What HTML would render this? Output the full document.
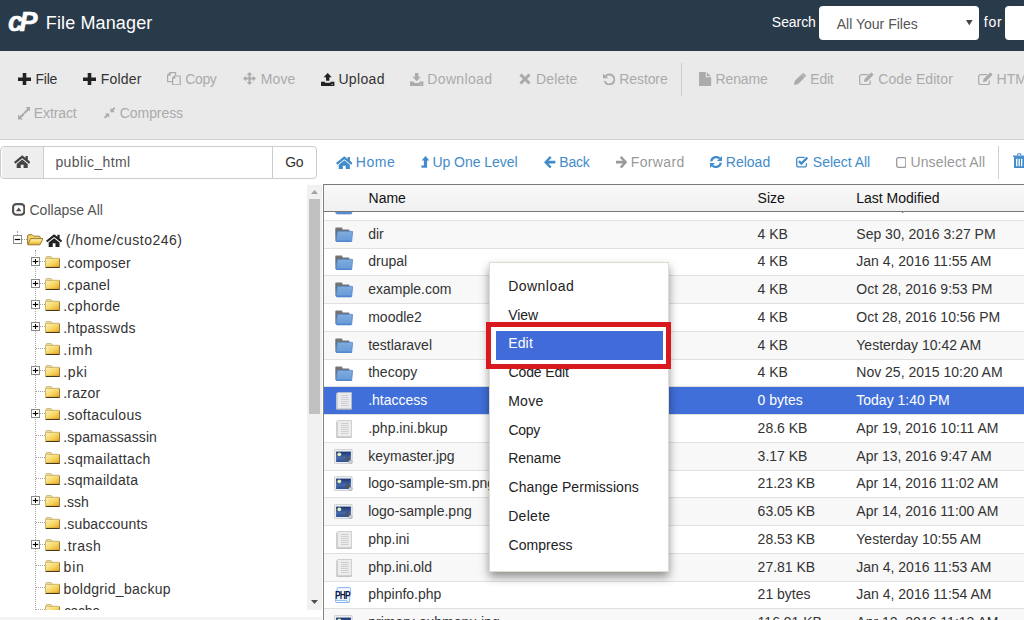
<!DOCTYPE html><html><head><meta charset="utf-8"><title>File Manager</title><style>html,body{margin:0;padding:0}body{width:1024px;height:620px;overflow:hidden;position:relative;background:#fff;font-family:"Liberation Sans", sans-serif;}.t{position:absolute;white-space:nowrap;line-height:20px;height:20px}</style></head><body><div style="position:absolute;left:0px;top:0px;width:1024px;height:51px;background:#293a4a"></div><span style="position:absolute;left:8px;top:7.3px;font-size:27px;line-height:30px;font-weight:bold;font-style:italic;color:#fff;letter-spacing:-3.4px;-webkit-text-stroke:0.5px #fff">cP</span><span class="t" style="left:45.82px;top:12.76px;font-size:18px;color:#fff;letter-spacing:0.130px;">File Manager</span><span class="t" style="left:771.86px;top:12.15px;font-size:14px;color:#fff;letter-spacing:-0.063px;">Search</span><div style="position:absolute;left:819.2px;top:6.1px;width:160.1px;height:33.6px;background:#fff;border-radius:4px"></div><span class="t" style="left:836.72px;top:13.90px;font-size:14px;color:#555;letter-spacing:0.007px;">All Your Files</span><svg style="position:absolute;left:966.1px;top:20px;" width="6.6" height="5.4" viewBox="0 0 6 5" preserveAspectRatio="none"><path d="M0 0h6L3 5z" fill="#444"/></svg><span class="t" style="left:983.65px;top:12.15px;font-size:14px;color:#fff;letter-spacing:0.900px;">for</span><div style="position:absolute;left:1005.2px;top:6.1px;width:30px;height:33.6px;background:#fff;border-radius:4px"></div><div style="position:absolute;left:0px;top:51px;width:1024px;height:88px;background:#eaeaea"></div><div style="position:absolute;left:0px;top:139px;width:1024px;height:1px;background:#cfcfcf"></div><svg style="position:absolute;left:17.8px;top:73px;" width="13" height="12.4" viewBox="0 0 13 12.4" preserveAspectRatio="none"><path d="M4.7 0h3.600v4.400H13v3.600H8.300V12.400H4.700V8H0V4.400h4.700z" fill="#222"/></svg><span class="t" style="left:35.60px;top:68.95px;font-size:14px;color:#333;letter-spacing:-0.314px;">File</span><svg style="position:absolute;left:82.8px;top:73px;" width="13" height="12.4" viewBox="0 0 13 12.4" preserveAspectRatio="none"><path d="M4.7 0h3.600v4.400H13v3.600H8.300V12.400H4.700V8H0V4.400h4.700z" fill="#222"/></svg><span class="t" style="left:100.85px;top:68.95px;font-size:14px;color:#333;letter-spacing:0.159px;">Folder</span><svg style="position:absolute;left:166.9px;top:71.9px;" width="14" height="13.6" viewBox="0 0 14 13.6" preserveAspectRatio="none"><g fill="none" stroke="#ababab" stroke-width="1.200" stroke-linejoin="round"><path d="M8.600 3.600V.6H3.100L.6 3.100V9.700H5.200"/><path d="M3.100 .6V3.100H.6"/><path d="M7.700 4H13.200V12.900H5.600V6.100z"/><path d="M7.700 4V6.100H5.600"/></g></svg><span class="t" style="left:185.29px;top:68.95px;font-size:14px;color:#ababab;letter-spacing:-0.400px;">Copy</span><svg style="position:absolute;left:243.1px;top:71.7px;" width="13" height="13" viewBox="0 0 13 13" preserveAspectRatio="none"><path fill="#ababab" d="M6.500 0L9.300 3.100H7.500V5.500H9.900V3.700L13 6.500 9.900 9.300V7.500H7.500V9.900H9.300L6.500 13 3.700 9.900H5.500V7.500H3.100V9.300L0 6.500 3.100 3.700V5.500H5.500V3.100H3.700z"/></svg><span class="t" style="left:260.85px;top:68.95px;font-size:14px;color:#ababab;letter-spacing:0.045px;">Move</span><svg style="position:absolute;left:321.2px;top:72.6px;" width="13.4" height="13" viewBox="0 0 13.4 13" preserveAspectRatio="none"><g fill="#222"><path d="M6.700 0L10.800 4.300H8.400V7.800H5V4.300H2.600z"/><path d="M0 8.700H4V9.700H9.400V8.700H13.400V13H0z"/></g><rect x="10.600" y="10.900" width="1.100" height="1" fill="#eaeaea"/></svg><span class="t" style="left:338.42px;top:68.95px;font-size:14px;color:#333;letter-spacing:0.341px;">Upload</span><svg style="position:absolute;left:410.3px;top:72.6px;" width="13.4" height="13" viewBox="0 0 13.4 13" preserveAspectRatio="none"><g fill="#ababab"><path d="M5 0H8.400V3.800H10.800L6.700 8.200 2.600 3.800H5z"/><path d="M0 8.500H3.300L4.800 10H8.600L10.100 8.500H13.400V13H0z"/></g><rect x="10.600" y="10.900" width="1.100" height="1" fill="#eaeaea"/></svg><span class="t" style="left:427.35px;top:68.95px;font-size:14px;color:#ababab;letter-spacing:0.341px;">Download</span><svg style="position:absolute;left:519.2px;top:73.2px;" width="12" height="12" viewBox="0 0 12 12" preserveAspectRatio="none"><path d="M1.5 1.5l9 9M10.5 1.5l-9 9" stroke="#ababab" stroke-width="3.1" fill="none"/></svg><span class="t" style="left:536.10px;top:68.95px;font-size:14px;color:#ababab;letter-spacing:0.130px;">Delete</span><svg style="position:absolute;left:602.5px;top:72.8px;" width="12.5" height="12.5" viewBox="0 0 12.5 12.5" preserveAspectRatio="none"><path d="M2.6 3.2A5 5 0 1 1 1.6 8" stroke="#ababab" stroke-width="1.9" fill="none"/><path d="M0 0.6L5.2 5.2H0z" fill="#ababab"/></svg><span class="t" style="left:619.35px;top:68.95px;font-size:14px;color:#ababab;letter-spacing:-0.110px;">Restore</span><div style="position:absolute;left:681.0px;top:62.5px;width:1.2px;height:33px;background:#cecece"></div><svg style="position:absolute;left:699.4px;top:71.6px;" width="12.2" height="14.2" viewBox="0 0 11.5 13.5" preserveAspectRatio="none"><path d="M0 0.8Q0 0 .8 0H6.4V4.2Q6.4 5 7.2 5H11.5V12.7Q11.5 13.5 10.7 13.5H.8Q0 13.5 0 12.7z" fill="#ababab"/><path d="M7.4 0.2L11.3 4H7.4z" fill="#ababab"/></svg><span class="t" style="left:715.60px;top:68.95px;font-size:14px;color:#ababab;letter-spacing:-0.160px;">Rename</span><svg style="position:absolute;left:794px;top:72.8px;" width="12" height="12" viewBox="0 0 12 12" preserveAspectRatio="none"><path d="M0 12l.7-3.900L7.500 1.300l3.200 3.200L3.900 11.300zM8.300 .5a1.100 1.100 0 0 1 1.600 0l1.600 1.600a1.100 1.100 0 0 1 0 1.600l-.5 .5L7.800 1z" fill="#ababab"/></svg><span class="t" style="left:810.35px;top:68.95px;font-size:14px;color:#ababab;letter-spacing:-0.258px;">Edit</span><svg style="position:absolute;left:859px;top:71.8px;" width="15" height="13.4" viewBox="0 0 15 13.4" preserveAspectRatio="none"><path d="M9.400 2.600H2.600A1.900 1.900 0 0 0 .7 4.500v6.200a1.900 1.900 0 0 0 1.900 1.900h6.800a1.900 1.900 0 0 0 1.900-1.900V8.600" stroke="#ababab" stroke-width="1.250" fill="none"/><path d="M5 9.900l.5-2.800L11.700 .9a.9 .9 0 0 1 1.300 0l1.100 1.100a.9 .9 0 0 1 0 1.300L7.900 9.500z" fill="#ababab"/></svg><span class="t" style="left:878.29px;top:68.95px;font-size:14px;color:#ababab;letter-spacing:0.061px;">Code Editor</span><svg style="position:absolute;left:978px;top:71.8px;" width="15" height="13.4" viewBox="0 0 15 13.4" preserveAspectRatio="none"><path d="M9.400 2.600H2.600A1.900 1.900 0 0 0 .7 4.500v6.200a1.900 1.900 0 0 0 1.900 1.900h6.800a1.900 1.900 0 0 0 1.900-1.900V8.600" stroke="#ababab" stroke-width="1.250" fill="none"/><path d="M5 9.900l.5-2.800L11.700 .9a.9 .9 0 0 1 1.300 0l1.100 1.100a.9 .9 0 0 1 0 1.300L7.900 9.500z" fill="#ababab"/></svg><span class="t" style="left:996.60px;top:68.95px;font-size:14px;color:#ababab;letter-spacing:-0.008px;">HTML Editor</span><svg style="position:absolute;left:17.6px;top:107.0px;" width="12.5" height="12.5" viewBox="0 0 12.5 12.5" preserveAspectRatio="none"><g fill="#ababab"><path d="M7.600 0H12.500V4.900L10.800 3.200 7.900 6.100 6.400 4.600 9.300 1.700z"/><path d="M4.900 12.500H0V7.600L1.700 9.300 4.600 6.400 6.100 7.900 3.200 10.800z"/></g><path d="M3 9.500L9.500 3" stroke="#ababab" stroke-width="1.700"/></svg><span class="t" style="left:33.85px;top:102.75px;font-size:14px;color:#ababab;letter-spacing:-0.121px;">Extract</span><svg style="position:absolute;left:103.7px;top:107.1px;" width="11.6" height="11.6" viewBox="0 0 11.6 11.6" preserveAspectRatio="none"><g fill="#ababab"><path d="M6.4 5.2V.8l1.5 1.5L10.2 0l1.4 1.4-2.3 2.3 1.5 1.5z"/><path d="M5.2 6.4v4.4L3.7 9.3 1.4 11.6 0 10.2l2.3-2.3L.8 6.4z"/></g></svg><span class="t" style="left:119.79px;top:102.75px;font-size:14px;color:#ababab;letter-spacing:-0.069px;">Compress</span><div style="position:absolute;left:0.2px;top:146px;width:317.2px;height:33px;border:1px solid #ccc;border-radius:4px;box-sizing:border-box;background:#fff"></div><div style="position:absolute;left:1.5px;top:147px;width:42px;height:31px;background:#eee;border-right:1px solid #ccc;border-radius:3px 0 0 3px;box-sizing:border-box"></div><div style="position:absolute;left:272.0px;top:147px;width:1px;height:31px;background:#ccc"></div><svg style="position:absolute;left:13.8px;top:154.9px;" width="16.4" height="13.5" viewBox="-.2 0 16.4 13.5" preserveAspectRatio="none"><path d="M8 .2L-.2 7l1.400 1.700L8 3.200l6.800 5.500L16.200 7l-2.600-2.200V.9h-2.300v2zM8 4.400L2.500 8.900V13.500H6.600V9.800h2.800V13.500h4.100V8.900z" fill="#444"/></svg><span class="t" style="left:55.40px;top:152.25px;font-size:14px;color:#555;letter-spacing:0.401px;">public_html</span><span class="t" style="left:285.30px;top:152.25px;font-size:14px;color:#333;letter-spacing:-0.400px;">Go</span><svg style="position:absolute;left:335.5px;top:155.5px;" width="16.6" height="13.4" viewBox="-.2 0 16.4 13.5" preserveAspectRatio="none"><path d="M8 .2L-.2 7l1.400 1.700L8 3.200l6.800 5.500L16.200 7l-2.600-2.200V.9h-2.300v2zM8 4.400L2.500 8.900V13.500H6.600V9.800h2.800V13.500h4.100V8.900z" fill="#428bca"/></svg><span class="t" style="left:355.85px;top:152.25px;font-size:14px;color:#428bca;letter-spacing:0.504px;">Home</span><svg style="position:absolute;left:421.1px;top:156.2px;" width="8.4" height="11.8" viewBox="0 0 8.4 11.8" preserveAspectRatio="none"><path d="M4.500 0L8.300 4.400H6.100V11.800H.8L0 9.600H2.900V4.400H.7z" fill="#428bca"/></svg><span class="t" style="left:432.42px;top:152.25px;font-size:14px;color:#428bca;letter-spacing:-0.027px;">Up One Level</span><svg style="position:absolute;left:544.4px;top:155.9px;" width="11.4" height="12.4" viewBox="0 0 11.4 12.4" preserveAspectRatio="none"><path d="M5.900 0l1.700 1.700-3.100 3.100h6.900v2.800H4.500l3.100 3.100L5.900 12.400 0 6.200z" fill="#428bca"/></svg><span class="t" style="left:559.35px;top:152.25px;font-size:14px;color:#428bca;letter-spacing:-0.199px;">Back</span><svg style="position:absolute;left:615.7px;top:155.9px;" width="11.4" height="12.4" viewBox="0 0 11.4 12.4" preserveAspectRatio="none"><path d="M5.900 0l1.700 1.700-3.100 3.100h6.900v2.800H4.500l3.100 3.100L5.900 12.400 0 6.200z" fill="#999" transform="translate(11.4,0) scale(-1,1)"/></svg><span class="t" style="left:630.85px;top:152.25px;font-size:14px;color:#999;letter-spacing:0.332px;">Forward</span><svg style="position:absolute;left:710.2px;top:156.3px;" width="12" height="12" viewBox="0 0 12 12" preserveAspectRatio="none"><g fill="none" stroke="#428bca" stroke-width="2.200"><path d="M1.200 5.400A4.900 4.900 0 0 1 9.600 2.600"/><path d="M10.800 6.600A4.900 4.900 0 0 1 2.400 9.400"/></g><path d="M12 0v5H7z" fill="#428bca"/><path d="M0 12V7h5z" fill="#428bca"/></svg><span class="t" style="left:725.85px;top:152.25px;font-size:14px;color:#428bca;letter-spacing:-0.005px;">Reload</span><svg style="position:absolute;left:796px;top:155.5px;" width="12.6" height="12" viewBox="0 0 12.6 12" preserveAspectRatio="none"><path d="M8.600 1.400H2.600A1.900 1.900 0 0 0 .7 3.300v5.700a1.900 1.900 0 0 0 1.900 1.900h5.900a1.900 1.900 0 0 0 1.900-1.900V7.200" stroke="#428bca" stroke-width="1.300" fill="none"/><path d="M2.900 5.100l2.500 2.500 5.900-6" stroke="#428bca" stroke-width="2.300" fill="none"/></svg><span class="t" style="left:812.86px;top:152.25px;font-size:14px;color:#428bca;letter-spacing:-0.025px;">Select All</span><svg style="position:absolute;left:895.5px;top:157px;" width="10.6" height="11" viewBox="0 0 10.6 11" preserveAspectRatio="none"><rect x=".7" y=".7" width="9.2" height="9.6" rx="1.8" stroke="#999" stroke-width="1.3" fill="none"/></svg><span class="t" style="left:910.42px;top:152.25px;font-size:14px;color:#999;letter-spacing:0.151px;">Unselect All</span><div style="position:absolute;left:998.1px;top:146px;width:1.1px;height:33px;background:#cfcfcf"></div><svg style="position:absolute;left:1012.8px;top:152.7px;" width="12.4" height="15.6" viewBox="0 0 11 13.5" preserveAspectRatio="none"><g fill="#428bca"><path d="M0 2.200h11v1.200H0z"/><path d="M3.300 2.200l.9-2h2.600l.9 2H6.700L6.200 1.100H4.800L4.300 2.200z"/><path d="M.9 3.400h9.200v8.700q0 1.400-1.400 1.400H2.300Q.9 13.500 .9 12.100z"/></g><path d="M3.300 5v6.500M5.500 5v6.500M7.700 5v6.500" stroke="#fff" stroke-width="1.150"/></svg><svg style="position:absolute;left:11.7px;top:202.9px;" width="13.4" height="12.8" viewBox="0 0 13.4 12.8" preserveAspectRatio="none"><rect x="1.100" y="1.100" width="11.200" height="10.600" rx="3.200" stroke="#505050" stroke-width="2.100" fill="none"/><path d="M6.700 4.600L9.500 8.200H3.900z" fill="#505050"/></svg><span class="t" style="left:29.49px;top:199.85px;font-size:14px;color:#555;letter-spacing:0.026px;">Collapse All</span><svg width="0" height="0" style="position:absolute"><defs><linearGradient id="fg" x1="0" y1="0" x2="0" y2="1"><stop offset="0" stop-color="#fff6c0"/><stop offset=".55" stop-color="#f6d65f"/><stop offset="1" stop-color="#dba51c"/></linearGradient><linearGradient id="fg2" x1="0" y1="0" x2="1" y2="1"><stop offset="0" stop-color="#fdf4bc"/><stop offset=".5" stop-color="#f7d868"/><stop offset="1" stop-color="#e6a31f"/></linearGradient></defs></svg><div style="position:absolute;left:17px;top:231px;width:0px;height:4px;border-left:1px dotted #a4a4a4"></div><svg style="position:absolute;left:13px;top:234.6px;" width="9" height="9" viewBox="0 0 9 9" preserveAspectRatio="none"><rect x=".5" y=".5" width="8" height="8" fill="#fff" stroke="#8a8a8a"/><path d="M1.800 4.500h5.400" stroke="#000" stroke-width="1.200"/></svg><div style="position:absolute;left:22px;top:239px;width:5px;height:0px;border-top:1px dotted #a4a4a4"></div><svg style="position:absolute;left:26.6px;top:234.4px;" width="16.5" height="11.5" viewBox="0 0 16.5 11.5" preserveAspectRatio="none"><path d="M.6 10V2Q.6 .7 2 .7H5.200L6.600 2.200H12Q13.300 2.200 13.300 3.500V4.500" fill="#f3d36a" stroke="#9b7a2c"/><path d="M.8 10.800L3.600 4.600H16L13 10.800z" fill="url(#fg)" stroke="#9b7a2c" stroke-linejoin="round"/></svg><svg style="position:absolute;left:46.1px;top:234.1px;" width="16.2" height="12.9" viewBox="-.2 0 16.4 13.5" preserveAspectRatio="none"><path d="M8 .2L-.2 7l1.400 1.700L8 3.200l6.800 5.500L16.200 7l-2.600-2.200V.9h-2.300v2zM8 4.400L2.500 8.900V13.500H6.600V9.800h2.800V13.500h4.100V8.900z" fill="#222"/></svg><span class="t" style="left:65.83px;top:230.45px;font-size:14px;color:#333;letter-spacing:0.472px;">(/home/custo246)</span><div style="position:absolute;left:0;top:185px;width:308px;height:424.5px;overflow:hidden"><div style="position:absolute;left:0;top:-185px;width:308px;height:700px"><div style="position:absolute;left:35px;top:250px;width:0px;height:390px;border-left:1px dotted #a4a4a4"></div><div style="position:absolute;left:36px;top:260.8px;width:8.5px;height:0px;border-top:1px dotted #a4a4a4"></div><svg style="position:absolute;left:30.7px;top:256.90000000000003px;" width="9" height="9" viewBox="0 0 9 9" preserveAspectRatio="none"><rect x=".5" y=".5" width="8" height="8" fill="#fff" stroke="#8a8a8a"/><path d="M1.800 4.500h5.400" stroke="#000" stroke-width="1.200"/><path d="M4.500 2v5" stroke="#000" stroke-width="1"/></svg><svg style="position:absolute;left:44.7px;top:255.79999999999998px;" width="15.2" height="12.2" viewBox="0 0 15.2 12.2" preserveAspectRatio="none"><path d="M.9 2.600V1.700Q.9 .5 2.100 .5H5.600Q6.500 .5 6.900 1.400L7.400 2.600z" fill="#f8e8a0" stroke="#c4ad70" stroke-width=".8"/><rect x=".5" y="2.300" width="14.100" height="9.100" rx=".7" fill="url(#fg2)" stroke="#bfa35c" stroke-width=".8"/><path d="M.7 11.500H14.700" stroke="#4a3816" stroke-width="1.100"/><path d="M14.700 2.900V11.600" stroke="#8a6a28" stroke-width=".9"/></svg><span class="t" style="left:63.22px;top:252.85px;font-size:14px;color:#333;letter-spacing:0.269px;">.composer</span><div style="position:absolute;left:36px;top:282.55px;width:8.5px;height:0px;border-top:1px dotted #a4a4a4"></div><svg style="position:absolute;left:30.7px;top:278.65000000000003px;" width="9" height="9" viewBox="0 0 9 9" preserveAspectRatio="none"><rect x=".5" y=".5" width="8" height="8" fill="#fff" stroke="#8a8a8a"/><path d="M1.800 4.500h5.400" stroke="#000" stroke-width="1.200"/><path d="M4.500 2v5" stroke="#000" stroke-width="1"/></svg><svg style="position:absolute;left:44.7px;top:277.55px;" width="15.2" height="12.2" viewBox="0 0 15.2 12.2" preserveAspectRatio="none"><path d="M.9 2.600V1.700Q.9 .5 2.100 .5H5.600Q6.500 .5 6.900 1.400L7.400 2.600z" fill="#f8e8a0" stroke="#c4ad70" stroke-width=".8"/><rect x=".5" y="2.300" width="14.100" height="9.100" rx=".7" fill="url(#fg2)" stroke="#bfa35c" stroke-width=".8"/><path d="M.7 11.500H14.700" stroke="#4a3816" stroke-width="1.100"/><path d="M14.700 2.900V11.600" stroke="#8a6a28" stroke-width=".9"/></svg><span class="t" style="left:63.22px;top:274.60px;font-size:14px;color:#333;letter-spacing:0.260px;">.cpanel</span><div style="position:absolute;left:36px;top:304.3px;width:8.5px;height:0px;border-top:1px dotted #a4a4a4"></div><svg style="position:absolute;left:30.7px;top:300.40000000000003px;" width="9" height="9" viewBox="0 0 9 9" preserveAspectRatio="none"><rect x=".5" y=".5" width="8" height="8" fill="#fff" stroke="#8a8a8a"/><path d="M1.800 4.500h5.400" stroke="#000" stroke-width="1.200"/><path d="M4.500 2v5" stroke="#000" stroke-width="1"/></svg><svg style="position:absolute;left:44.7px;top:299.3px;" width="15.2" height="12.2" viewBox="0 0 15.2 12.2" preserveAspectRatio="none"><path d="M.9 2.600V1.700Q.9 .5 2.100 .5H5.600Q6.500 .5 6.900 1.400L7.400 2.600z" fill="#f8e8a0" stroke="#c4ad70" stroke-width=".8"/><rect x=".5" y="2.300" width="14.100" height="9.100" rx=".7" fill="url(#fg2)" stroke="#bfa35c" stroke-width=".8"/><path d="M.7 11.500H14.700" stroke="#4a3816" stroke-width="1.100"/><path d="M14.700 2.900V11.600" stroke="#8a6a28" stroke-width=".9"/></svg><span class="t" style="left:63.22px;top:296.35px;font-size:14px;color:#333;letter-spacing:0.345px;">.cphorde</span><div style="position:absolute;left:36px;top:326.05px;width:8.5px;height:0px;border-top:1px dotted #a4a4a4"></div><svg style="position:absolute;left:30.7px;top:322.15000000000003px;" width="9" height="9" viewBox="0 0 9 9" preserveAspectRatio="none"><rect x=".5" y=".5" width="8" height="8" fill="#fff" stroke="#8a8a8a"/><path d="M1.800 4.500h5.400" stroke="#000" stroke-width="1.200"/><path d="M4.500 2v5" stroke="#000" stroke-width="1"/></svg><svg style="position:absolute;left:44.7px;top:321.05px;" width="15.2" height="12.2" viewBox="0 0 15.2 12.2" preserveAspectRatio="none"><path d="M.9 2.600V1.700Q.9 .5 2.100 .5H5.600Q6.500 .5 6.900 1.400L7.400 2.600z" fill="#f8e8a0" stroke="#c4ad70" stroke-width=".8"/><rect x=".5" y="2.300" width="14.100" height="9.100" rx=".7" fill="url(#fg2)" stroke="#bfa35c" stroke-width=".8"/><path d="M.7 11.500H14.700" stroke="#4a3816" stroke-width="1.100"/><path d="M14.700 2.900V11.600" stroke="#8a6a28" stroke-width=".9"/></svg><span class="t" style="left:63.22px;top:318.10px;font-size:14px;color:#333;letter-spacing:0.249px;">.htpasswds</span><div style="position:absolute;left:36px;top:347.8px;width:8.5px;height:0px;border-top:1px dotted #a4a4a4"></div><svg style="position:absolute;left:44.7px;top:342.8px;" width="15.2" height="12.2" viewBox="0 0 15.2 12.2" preserveAspectRatio="none"><path d="M.9 2.600V1.700Q.9 .5 2.100 .5H5.600Q6.500 .5 6.900 1.400L7.400 2.600z" fill="#f8e8a0" stroke="#c4ad70" stroke-width=".8"/><rect x=".5" y="2.300" width="14.100" height="9.100" rx=".7" fill="url(#fg2)" stroke="#bfa35c" stroke-width=".8"/><path d="M.7 11.500H14.700" stroke="#4a3816" stroke-width="1.100"/><path d="M14.700 2.900V11.600" stroke="#8a6a28" stroke-width=".9"/></svg><span class="t" style="left:63.22px;top:339.85px;font-size:14px;color:#333;letter-spacing:0.900px;">.imh</span><div style="position:absolute;left:36px;top:369.55px;width:8.5px;height:0px;border-top:1px dotted #a4a4a4"></div><svg style="position:absolute;left:30.7px;top:365.65000000000003px;" width="9" height="9" viewBox="0 0 9 9" preserveAspectRatio="none"><rect x=".5" y=".5" width="8" height="8" fill="#fff" stroke="#8a8a8a"/><path d="M1.800 4.500h5.400" stroke="#000" stroke-width="1.200"/><path d="M4.500 2v5" stroke="#000" stroke-width="1"/></svg><svg style="position:absolute;left:44.7px;top:364.55px;" width="15.2" height="12.2" viewBox="0 0 15.2 12.2" preserveAspectRatio="none"><path d="M.9 2.600V1.700Q.9 .5 2.100 .5H5.600Q6.500 .5 6.900 1.400L7.400 2.600z" fill="#f8e8a0" stroke="#c4ad70" stroke-width=".8"/><rect x=".5" y="2.300" width="14.100" height="9.100" rx=".7" fill="url(#fg2)" stroke="#bfa35c" stroke-width=".8"/><path d="M.7 11.500H14.700" stroke="#4a3816" stroke-width="1.100"/><path d="M14.700 2.900V11.600" stroke="#8a6a28" stroke-width=".9"/></svg><span class="t" style="left:63.22px;top:361.60px;font-size:14px;color:#333;letter-spacing:0.642px;">.pki</span><div style="position:absolute;left:36px;top:391.3px;width:8.5px;height:0px;border-top:1px dotted #a4a4a4"></div><svg style="position:absolute;left:44.7px;top:386.3px;" width="15.2" height="12.2" viewBox="0 0 15.2 12.2" preserveAspectRatio="none"><path d="M.9 2.600V1.700Q.9 .5 2.100 .5H5.600Q6.500 .5 6.900 1.400L7.400 2.600z" fill="#f8e8a0" stroke="#c4ad70" stroke-width=".8"/><rect x=".5" y="2.300" width="14.100" height="9.100" rx=".7" fill="url(#fg2)" stroke="#bfa35c" stroke-width=".8"/><path d="M.7 11.500H14.700" stroke="#4a3816" stroke-width="1.100"/><path d="M14.700 2.900V11.600" stroke="#8a6a28" stroke-width=".9"/></svg><span class="t" style="left:63.22px;top:383.35px;font-size:14px;color:#333;letter-spacing:0.243px;">.razor</span><div style="position:absolute;left:36px;top:413.05px;width:8.5px;height:0px;border-top:1px dotted #a4a4a4"></div><svg style="position:absolute;left:30.7px;top:409.15000000000003px;" width="9" height="9" viewBox="0 0 9 9" preserveAspectRatio="none"><rect x=".5" y=".5" width="8" height="8" fill="#fff" stroke="#8a8a8a"/><path d="M1.800 4.500h5.400" stroke="#000" stroke-width="1.200"/><path d="M4.500 2v5" stroke="#000" stroke-width="1"/></svg><svg style="position:absolute;left:44.7px;top:408.05px;" width="15.2" height="12.2" viewBox="0 0 15.2 12.2" preserveAspectRatio="none"><path d="M.9 2.600V1.700Q.9 .5 2.100 .5H5.600Q6.500 .5 6.900 1.400L7.400 2.600z" fill="#f8e8a0" stroke="#c4ad70" stroke-width=".8"/><rect x=".5" y="2.300" width="14.100" height="9.100" rx=".7" fill="url(#fg2)" stroke="#bfa35c" stroke-width=".8"/><path d="M.7 11.500H14.700" stroke="#4a3816" stroke-width="1.100"/><path d="M14.700 2.900V11.600" stroke="#8a6a28" stroke-width=".9"/></svg><span class="t" style="left:63.22px;top:405.10px;font-size:14px;color:#333;letter-spacing:0.324px;">.softaculous</span><div style="position:absolute;left:36px;top:434.8px;width:8.5px;height:0px;border-top:1px dotted #a4a4a4"></div><svg style="position:absolute;left:44.7px;top:429.8px;" width="15.2" height="12.2" viewBox="0 0 15.2 12.2" preserveAspectRatio="none"><path d="M.9 2.600V1.700Q.9 .5 2.100 .5H5.600Q6.500 .5 6.900 1.400L7.400 2.600z" fill="#f8e8a0" stroke="#c4ad70" stroke-width=".8"/><rect x=".5" y="2.300" width="14.100" height="9.100" rx=".7" fill="url(#fg2)" stroke="#bfa35c" stroke-width=".8"/><path d="M.7 11.500H14.700" stroke="#4a3816" stroke-width="1.100"/><path d="M14.700 2.900V11.600" stroke="#8a6a28" stroke-width=".9"/></svg><span class="t" style="left:63.22px;top:426.85px;font-size:14px;color:#333;letter-spacing:0.091px;">.spamassassin</span><div style="position:absolute;left:36px;top:456.55px;width:8.5px;height:0px;border-top:1px dotted #a4a4a4"></div><svg style="position:absolute;left:44.7px;top:451.55px;" width="15.2" height="12.2" viewBox="0 0 15.2 12.2" preserveAspectRatio="none"><path d="M.9 2.600V1.700Q.9 .5 2.100 .5H5.600Q6.500 .5 6.900 1.400L7.400 2.600z" fill="#f8e8a0" stroke="#c4ad70" stroke-width=".8"/><rect x=".5" y="2.300" width="14.100" height="9.100" rx=".7" fill="url(#fg2)" stroke="#bfa35c" stroke-width=".8"/><path d="M.7 11.500H14.700" stroke="#4a3816" stroke-width="1.100"/><path d="M14.700 2.900V11.600" stroke="#8a6a28" stroke-width=".9"/></svg><span class="t" style="left:63.22px;top:448.60px;font-size:14px;color:#333;letter-spacing:0.392px;">.sqmailattach</span><div style="position:absolute;left:36px;top:478.3px;width:8.5px;height:0px;border-top:1px dotted #a4a4a4"></div><svg style="position:absolute;left:44.7px;top:473.3px;" width="15.2" height="12.2" viewBox="0 0 15.2 12.2" preserveAspectRatio="none"><path d="M.9 2.600V1.700Q.9 .5 2.100 .5H5.600Q6.500 .5 6.900 1.400L7.400 2.600z" fill="#f8e8a0" stroke="#c4ad70" stroke-width=".8"/><rect x=".5" y="2.300" width="14.100" height="9.100" rx=".7" fill="url(#fg2)" stroke="#bfa35c" stroke-width=".8"/><path d="M.7 11.500H14.700" stroke="#4a3816" stroke-width="1.100"/><path d="M14.700 2.900V11.600" stroke="#8a6a28" stroke-width=".9"/></svg><span class="t" style="left:63.22px;top:470.35px;font-size:14px;color:#333;letter-spacing:0.318px;">.sqmaildata</span><div style="position:absolute;left:36px;top:500.05px;width:8.5px;height:0px;border-top:1px dotted #a4a4a4"></div><svg style="position:absolute;left:30.7px;top:496.15000000000003px;" width="9" height="9" viewBox="0 0 9 9" preserveAspectRatio="none"><rect x=".5" y=".5" width="8" height="8" fill="#fff" stroke="#8a8a8a"/><path d="M1.800 4.500h5.400" stroke="#000" stroke-width="1.200"/><path d="M4.500 2v5" stroke="#000" stroke-width="1"/></svg><svg style="position:absolute;left:44.7px;top:495.05px;" width="15.2" height="12.2" viewBox="0 0 15.2 12.2" preserveAspectRatio="none"><path d="M.9 2.600V1.700Q.9 .5 2.100 .5H5.600Q6.500 .5 6.900 1.400L7.400 2.600z" fill="#f8e8a0" stroke="#c4ad70" stroke-width=".8"/><rect x=".5" y="2.300" width="14.100" height="9.100" rx=".7" fill="url(#fg2)" stroke="#bfa35c" stroke-width=".8"/><path d="M.7 11.500H14.700" stroke="#4a3816" stroke-width="1.100"/><path d="M14.700 2.900V11.600" stroke="#8a6a28" stroke-width=".9"/></svg><span class="t" style="left:63.22px;top:492.10px;font-size:14px;color:#333;letter-spacing:0.000px;">.ssh</span><div style="position:absolute;left:36px;top:521.8000000000001px;width:8.5px;height:0px;border-top:1px dotted #a4a4a4"></div><svg style="position:absolute;left:44.7px;top:516.8000000000001px;" width="15.2" height="12.2" viewBox="0 0 15.2 12.2" preserveAspectRatio="none"><path d="M.9 2.600V1.700Q.9 .5 2.100 .5H5.600Q6.500 .5 6.900 1.400L7.400 2.600z" fill="#f8e8a0" stroke="#c4ad70" stroke-width=".8"/><rect x=".5" y="2.300" width="14.100" height="9.100" rx=".7" fill="url(#fg2)" stroke="#bfa35c" stroke-width=".8"/><path d="M.7 11.500H14.700" stroke="#4a3816" stroke-width="1.100"/><path d="M14.700 2.900V11.600" stroke="#8a6a28" stroke-width=".9"/></svg><span class="t" style="left:63.22px;top:513.85px;font-size:14px;color:#333;letter-spacing:0.162px;">.subaccounts</span><div style="position:absolute;left:36px;top:543.5500000000001px;width:8.5px;height:0px;border-top:1px dotted #a4a4a4"></div><svg style="position:absolute;left:30.7px;top:539.6500000000001px;" width="9" height="9" viewBox="0 0 9 9" preserveAspectRatio="none"><rect x=".5" y=".5" width="8" height="8" fill="#fff" stroke="#8a8a8a"/><path d="M1.800 4.500h5.400" stroke="#000" stroke-width="1.200"/><path d="M4.500 2v5" stroke="#000" stroke-width="1"/></svg><svg style="position:absolute;left:44.7px;top:538.5500000000001px;" width="15.2" height="12.2" viewBox="0 0 15.2 12.2" preserveAspectRatio="none"><path d="M.9 2.600V1.700Q.9 .5 2.100 .5H5.600Q6.500 .5 6.900 1.400L7.400 2.600z" fill="#f8e8a0" stroke="#c4ad70" stroke-width=".8"/><rect x=".5" y="2.300" width="14.100" height="9.100" rx=".7" fill="url(#fg2)" stroke="#bfa35c" stroke-width=".8"/><path d="M.7 11.500H14.700" stroke="#4a3816" stroke-width="1.100"/><path d="M14.700 2.900V11.600" stroke="#8a6a28" stroke-width=".9"/></svg><span class="t" style="left:63.22px;top:535.60px;font-size:14px;color:#333;letter-spacing:0.534px;">.trash</span><div style="position:absolute;left:36px;top:565.3000000000001px;width:8.5px;height:0px;border-top:1px dotted #a4a4a4"></div><svg style="position:absolute;left:44.7px;top:560.3000000000001px;" width="15.2" height="12.2" viewBox="0 0 15.2 12.2" preserveAspectRatio="none"><path d="M.9 2.600V1.700Q.9 .5 2.100 .5H5.600Q6.500 .5 6.900 1.400L7.400 2.600z" fill="#f8e8a0" stroke="#c4ad70" stroke-width=".8"/><rect x=".5" y="2.300" width="14.100" height="9.100" rx=".7" fill="url(#fg2)" stroke="#bfa35c" stroke-width=".8"/><path d="M.7 11.500H14.700" stroke="#4a3816" stroke-width="1.100"/><path d="M14.700 2.900V11.600" stroke="#8a6a28" stroke-width=".9"/></svg><span class="t" style="left:63.60px;top:557.35px;font-size:14px;color:#333;letter-spacing:0.812px;">bin</span><div style="position:absolute;left:36px;top:587.0500000000001px;width:8.5px;height:0px;border-top:1px dotted #a4a4a4"></div><svg style="position:absolute;left:44.7px;top:582.0500000000001px;" width="15.2" height="12.2" viewBox="0 0 15.2 12.2" preserveAspectRatio="none"><path d="M.9 2.600V1.700Q.9 .5 2.100 .5H5.600Q6.500 .5 6.900 1.400L7.400 2.600z" fill="#f8e8a0" stroke="#c4ad70" stroke-width=".8"/><rect x=".5" y="2.300" width="14.100" height="9.100" rx=".7" fill="url(#fg2)" stroke="#bfa35c" stroke-width=".8"/><path d="M.7 11.500H14.700" stroke="#4a3816" stroke-width="1.100"/><path d="M14.700 2.900V11.600" stroke="#8a6a28" stroke-width=".9"/></svg><span class="t" style="left:63.60px;top:579.10px;font-size:14px;color:#333;letter-spacing:0.303px;">boldgrid_backup</span><div style="position:absolute;left:36px;top:608.8000000000001px;width:8.5px;height:0px;border-top:1px dotted #a4a4a4"></div><svg style="position:absolute;left:44.7px;top:603.8000000000001px;" width="15.2" height="12.2" viewBox="0 0 15.2 12.2" preserveAspectRatio="none"><path d="M.9 2.600V1.700Q.9 .5 2.100 .5H5.600Q6.500 .5 6.900 1.400L7.400 2.600z" fill="#f8e8a0" stroke="#c4ad70" stroke-width=".8"/><rect x=".5" y="2.300" width="14.100" height="9.100" rx=".7" fill="url(#fg2)" stroke="#bfa35c" stroke-width=".8"/><path d="M.7 11.500H14.700" stroke="#4a3816" stroke-width="1.100"/><path d="M14.700 2.900V11.600" stroke="#8a6a28" stroke-width=".9"/></svg><span class="t" style="left:63.91px;top:600.85px;font-size:14px;color:#333;letter-spacing:-0.286px;">cache</span><div style="position:absolute;left:36px;top:630.5500000000001px;width:8.5px;height:0px;border-top:1px dotted #a4a4a4"></div><svg style="position:absolute;left:44.7px;top:625.5500000000001px;" width="15.2" height="12.2" viewBox="0 0 15.2 12.2" preserveAspectRatio="none"><path d="M.9 2.600V1.700Q.9 .5 2.100 .5H5.600Q6.500 .5 6.900 1.400L7.400 2.600z" fill="#f8e8a0" stroke="#c4ad70" stroke-width=".8"/><rect x=".5" y="2.300" width="14.100" height="9.100" rx=".7" fill="url(#fg2)" stroke="#bfa35c" stroke-width=".8"/><path d="M.7 11.500H14.700" stroke="#4a3816" stroke-width="1.100"/><path d="M14.700 2.900V11.600" stroke="#8a6a28" stroke-width=".9"/></svg><span class="t" style="left:63.91px;top:622.60px;font-size:14px;color:#333;letter-spacing:0.138px;">etc</span></div></div><div style="position:absolute;left:307px;top:184.5px;width:14.6px;height:425px;background:#f1f1f1"></div><div style="position:absolute;left:309px;top:199.3px;width:11.2px;height:215.2px;background:#c1c1c1"></div><svg style="position:absolute;left:310.5px;top:190px;" width="7" height="4" viewBox="0 0 7 4" preserveAspectRatio="none"><path d="M0 4L3.500 0 7 4z" fill="#a3a3a3"/></svg><svg style="position:absolute;left:311px;top:600px;" width="7" height="4" viewBox="0 0 7 4" preserveAspectRatio="none"><path d="M0 0h7L3.500 4z" fill="#505050"/></svg><div style="position:absolute;left:0px;top:617px;width:322px;height:3px;background:#f3f3f3"></div><div style="position:absolute;left:323px;top:185px;width:701px;height:26.5px;background:linear-gradient(#f9f9f9,#f0f0f0)"></div><div style="position:absolute;left:323px;top:184.4px;width:701px;height:1.1px;background:#7a7a7a"></div><div style="position:absolute;left:323px;top:210.8px;width:701px;height:1.2px;background:#767676"></div><span class="t" style="left:368.55px;top:188.25px;font-size:14px;color:#111;letter-spacing:0.000px;">Name</span><span class="t" style="left:757.56px;top:188.25px;font-size:14px;color:#111;letter-spacing:0.000px;">Size</span><span class="t" style="left:856.25px;top:188.25px;font-size:14px;color:#111;letter-spacing:0.000px;">Last Modified</span><svg width="0" height="0" style="position:absolute"><defs><linearGradient id="bf" x1="0" y1="0" x2="0" y2="1"><stop offset="0" stop-color="#80acdf"/><stop offset="1" stop-color="#6699d6"/></linearGradient><linearGradient id="gf" x1="0" y1="0" x2="0" y2="1"><stop offset="0" stop-color="#777"/><stop offset=".4" stop-color="#6a6a6a"/><stop offset="1" stop-color="#8c8c8c"/></linearGradient><linearGradient id="ig" x1="0" y1="0" x2="0" y2="1"><stop offset="0" stop-color="#1d3470"/><stop offset=".6" stop-color="#4669ad"/><stop offset="1" stop-color="#2f4f96"/></linearGradient></defs></svg><div style="position:absolute;left:323px;top:212px;width:701px;height:408px;overflow:hidden"><div style="position:absolute;left:-323px;top:-212px;width:1024px;height:700px"><div style="position:absolute;left:323px;top:192.55px;width:701px;height:27.75px;background:#fff"></div><svg style="position:absolute;left:335.1px;top:199.05px;" width="18" height="15.5" viewBox="0 0 18 15.5" preserveAspectRatio="none"><path d="M.3 1.200Q.3 .5 1 .5H7L7.700 2.500H13.700Q14.300 2.500 14.300 3.100V14H.3z" fill="url(#gf)"/><path d="M2.900 4.300H17.100Q17.700 4.300 17.600 4.900L16.700 14.200Q16.600 14.900 16 14.900H1.900Q1.200 14.900 1.300 14.200L2.300 4.900Q2.300 4.300 2.900 4.300z" fill="url(#bf)" stroke="#5088cd" stroke-width=".8"/><path d="M1.700 14.100H16.400" stroke="#4a82ca" stroke-width="1"/></svg><span class="t" style="left:368.20px;top:195.90px;font-size:14px;color:#333;letter-spacing:0.000px;">access</span><span class="t" style="left:757.60px;top:195.90px;font-size:14px;color:#333;letter-spacing:0.000px;">4 KB</span><span class="t" style="left:856.30px;top:195.90px;font-size:14px;color:#333;letter-spacing:0.000px;">Dec 19, 2015 9:47 AM</span><div style="position:absolute;left:323px;top:220.3px;width:701px;height:27.75px;background:#f8f8f8"></div><svg style="position:absolute;left:335.1px;top:226.8px;" width="18" height="15.5" viewBox="0 0 18 15.5" preserveAspectRatio="none"><path d="M.3 1.200Q.3 .5 1 .5H7L7.700 2.500H13.700Q14.300 2.500 14.300 3.100V14H.3z" fill="url(#gf)"/><path d="M2.900 4.300H17.100Q17.700 4.300 17.600 4.900L16.700 14.200Q16.600 14.900 16 14.900H1.900Q1.200 14.900 1.300 14.200L2.300 4.900Q2.300 4.300 2.900 4.300z" fill="url(#bf)" stroke="#5088cd" stroke-width=".8"/><path d="M1.700 14.100H16.400" stroke="#4a82ca" stroke-width="1"/></svg><span class="t" style="left:368.20px;top:223.65px;font-size:14px;color:#333;letter-spacing:0.000px;">dir</span><span class="t" style="left:757.60px;top:223.65px;font-size:14px;color:#333;letter-spacing:0.000px;">4 KB</span><span class="t" style="left:856.30px;top:223.65px;font-size:14px;color:#333;letter-spacing:0.000px;">Sep 30, 2016 3:27 PM</span><div style="position:absolute;left:323px;top:248.05px;width:701px;height:27.75px;background:#fff"></div><svg style="position:absolute;left:335.1px;top:254.55px;" width="18" height="15.5" viewBox="0 0 18 15.5" preserveAspectRatio="none"><path d="M.3 1.200Q.3 .5 1 .5H7L7.700 2.500H13.700Q14.300 2.500 14.300 3.100V14H.3z" fill="url(#gf)"/><path d="M2.900 4.300H17.100Q17.700 4.300 17.600 4.900L16.700 14.200Q16.600 14.900 16 14.900H1.900Q1.200 14.900 1.300 14.200L2.300 4.900Q2.300 4.300 2.900 4.300z" fill="url(#bf)" stroke="#5088cd" stroke-width=".8"/><path d="M1.700 14.100H16.400" stroke="#4a82ca" stroke-width="1"/></svg><span class="t" style="left:368.20px;top:251.40px;font-size:14px;color:#333;letter-spacing:0.000px;">drupal</span><span class="t" style="left:757.60px;top:251.40px;font-size:14px;color:#333;letter-spacing:0.000px;">4 KB</span><span class="t" style="left:856.30px;top:251.40px;font-size:14px;color:#333;letter-spacing:0.000px;">Jan 4, 2016 11:55 AM</span><div style="position:absolute;left:323px;top:275.8px;width:701px;height:27.75px;background:#f8f8f8"></div><svg style="position:absolute;left:335.1px;top:282.3px;" width="18" height="15.5" viewBox="0 0 18 15.5" preserveAspectRatio="none"><path d="M.3 1.200Q.3 .5 1 .5H7L7.700 2.500H13.700Q14.300 2.500 14.300 3.100V14H.3z" fill="url(#gf)"/><path d="M2.900 4.300H17.100Q17.700 4.300 17.600 4.900L16.700 14.200Q16.600 14.900 16 14.900H1.900Q1.200 14.900 1.300 14.200L2.300 4.900Q2.300 4.300 2.900 4.300z" fill="url(#bf)" stroke="#5088cd" stroke-width=".8"/><path d="M1.700 14.100H16.400" stroke="#4a82ca" stroke-width="1"/></svg><span class="t" style="left:368.20px;top:279.15px;font-size:14px;color:#333;letter-spacing:0.000px;">example.com</span><span class="t" style="left:757.60px;top:279.15px;font-size:14px;color:#333;letter-spacing:0.000px;">4 KB</span><span class="t" style="left:856.30px;top:279.15px;font-size:14px;color:#333;letter-spacing:0.000px;">Oct 28, 2016 9:53 PM</span><div style="position:absolute;left:323px;top:303.55px;width:701px;height:27.75px;background:#fff"></div><svg style="position:absolute;left:335.1px;top:310.05px;" width="18" height="15.5" viewBox="0 0 18 15.5" preserveAspectRatio="none"><path d="M.3 1.200Q.3 .5 1 .5H7L7.700 2.500H13.700Q14.300 2.500 14.300 3.100V14H.3z" fill="url(#gf)"/><path d="M2.900 4.300H17.100Q17.700 4.300 17.600 4.900L16.700 14.200Q16.600 14.900 16 14.900H1.900Q1.200 14.900 1.300 14.200L2.300 4.900Q2.300 4.300 2.900 4.300z" fill="url(#bf)" stroke="#5088cd" stroke-width=".8"/><path d="M1.700 14.100H16.400" stroke="#4a82ca" stroke-width="1"/></svg><span class="t" style="left:368.20px;top:306.90px;font-size:14px;color:#333;letter-spacing:0.000px;">moodle2</span><span class="t" style="left:757.60px;top:306.90px;font-size:14px;color:#333;letter-spacing:0.000px;">4 KB</span><span class="t" style="left:856.30px;top:306.90px;font-size:14px;color:#333;letter-spacing:0.000px;">Oct 28, 2016 10:56 PM</span><div style="position:absolute;left:323px;top:331.3px;width:701px;height:27.75px;background:#f8f8f8"></div><svg style="position:absolute;left:335.1px;top:337.8px;" width="18" height="15.5" viewBox="0 0 18 15.5" preserveAspectRatio="none"><path d="M.3 1.200Q.3 .5 1 .5H7L7.700 2.500H13.700Q14.300 2.500 14.300 3.100V14H.3z" fill="url(#gf)"/><path d="M2.900 4.300H17.100Q17.700 4.300 17.600 4.900L16.700 14.200Q16.600 14.900 16 14.900H1.900Q1.200 14.900 1.300 14.200L2.300 4.900Q2.300 4.300 2.900 4.300z" fill="url(#bf)" stroke="#5088cd" stroke-width=".8"/><path d="M1.700 14.100H16.400" stroke="#4a82ca" stroke-width="1"/></svg><span class="t" style="left:368.20px;top:334.65px;font-size:14px;color:#333;letter-spacing:0.000px;">testlaravel</span><span class="t" style="left:757.60px;top:334.65px;font-size:14px;color:#333;letter-spacing:0.000px;">4 KB</span><span class="t" style="left:856.30px;top:334.65px;font-size:14px;color:#333;letter-spacing:0.000px;">Yesterday 10:42 AM</span><div style="position:absolute;left:323px;top:359.05px;width:701px;height:27.75px;background:#fff"></div><svg style="position:absolute;left:335.1px;top:365.55px;" width="18" height="15.5" viewBox="0 0 18 15.5" preserveAspectRatio="none"><path d="M.3 1.200Q.3 .5 1 .5H7L7.700 2.500H13.700Q14.300 2.500 14.300 3.100V14H.3z" fill="url(#gf)"/><path d="M2.900 4.300H17.100Q17.700 4.300 17.600 4.900L16.700 14.200Q16.600 14.900 16 14.900H1.900Q1.200 14.900 1.300 14.200L2.300 4.900Q2.300 4.300 2.900 4.300z" fill="url(#bf)" stroke="#5088cd" stroke-width=".8"/><path d="M1.700 14.100H16.400" stroke="#4a82ca" stroke-width="1"/></svg><span class="t" style="left:368.20px;top:362.40px;font-size:14px;color:#333;letter-spacing:0.000px;">thecopy</span><span class="t" style="left:757.60px;top:362.40px;font-size:14px;color:#333;letter-spacing:0.000px;">4 KB</span><span class="t" style="left:856.30px;top:362.40px;font-size:14px;color:#333;letter-spacing:0.000px;">Nov 25, 2015 10:20 AM</span><div style="position:absolute;left:323px;top:387.2px;width:701px;height:26.75px;background:#416fd9"></div><svg style="position:absolute;left:336px;top:392.1px;" width="16" height="18" viewBox="0 0 16 18" preserveAspectRatio="none"><path d="M.5 1.800L1.800 .5H15.500V17H.5z" fill="#e9eaee" stroke="#b9c0cf" stroke-width=".8"/><path d="M1.300 2V16.600" stroke="#cfcfcf" stroke-width="1.400"/><path d="M.6 17.200H15.500" stroke="#b4b4b4" stroke-width="1"/><path d="M5 3.500H12.500M5 5.500H12.500M5 7.500H12.500M5 9.500H12.500M5 11.500H12.500M5 13.500H12.500" stroke="#c8c8c8" stroke-width=".8"/></svg><span class="t" style="left:368.20px;top:390.15px;font-size:14px;color:#fff;letter-spacing:0.000px;">.htaccess</span><span class="t" style="left:757.60px;top:390.15px;font-size:14px;color:#fff;letter-spacing:0.000px;">0 bytes</span><span class="t" style="left:856.30px;top:390.15px;font-size:14px;color:#fff;letter-spacing:0.000px;">Today 1:40 PM</span><div style="position:absolute;left:323px;top:414.55px;width:701px;height:27.75px;background:#fff"></div><svg style="position:absolute;left:336px;top:419.85px;" width="16" height="18" viewBox="0 0 16 18" preserveAspectRatio="none"><path d="M.5 1.800L1.800 .5H15.500V17H.5z" fill="#ececec" stroke="#c6c6c6" stroke-width=".8"/><path d="M1.300 2V16.600" stroke="#cfcfcf" stroke-width="1.400"/><path d="M.6 17.200H15.500" stroke="#b4b4b4" stroke-width="1"/><path d="M5 3.500H12.500M5 5.500H12.500M5 7.500H12.500M5 9.500H12.500M5 11.500H12.500M5 13.500H12.500" stroke="#c8c8c8" stroke-width=".8"/></svg><span class="t" style="left:368.20px;top:417.90px;font-size:14px;color:#333;letter-spacing:0.000px;">.php.ini.bkup</span><span class="t" style="left:757.60px;top:417.90px;font-size:14px;color:#333;letter-spacing:0.000px;">28.6 KB</span><span class="t" style="left:856.30px;top:417.90px;font-size:14px;color:#333;letter-spacing:0.000px;">Apr 19, 2016 10:11 AM</span><div style="position:absolute;left:323px;top:442.3px;width:701px;height:27.75px;background:#f8f8f8"></div><svg style="position:absolute;left:334.3px;top:448.6px;" width="18.6" height="15" viewBox="0 0 18.6 15" preserveAspectRatio="none"><rect x=".4" y=".4" width="17.800" height="14.200" rx="1" fill="#eceef1" stroke="#c3c6cb" stroke-width=".8"/><rect x="2.100" y="2.600" width="14.800" height="10.400" fill="url(#ig)"/><circle cx="5.300" cy="5.300" r="1.900" fill="#e6f3b4"/><path d="M10.500 12L13.200 6.500 15.200 8.800 16.300 12z" fill="#4e5563"/><circle cx="16.500" cy="13" r="1.700" fill="#d2d5da" stroke="#a5a9b0" stroke-width=".6"/></svg><span class="t" style="left:368.20px;top:445.65px;font-size:14px;color:#333;letter-spacing:0.000px;">keymaster.jpg</span><span class="t" style="left:757.60px;top:445.65px;font-size:14px;color:#333;letter-spacing:0.000px;">3.17 KB</span><span class="t" style="left:856.30px;top:445.65px;font-size:14px;color:#333;letter-spacing:0.000px;">Apr 13, 2016 9:47 AM</span><div style="position:absolute;left:323px;top:470.05px;width:701px;height:27.75px;background:#fff"></div><svg style="position:absolute;left:334.3px;top:476.35px;" width="18.6" height="15" viewBox="0 0 18.6 15" preserveAspectRatio="none"><rect x=".4" y=".4" width="17.800" height="14.200" rx="1" fill="#eceef1" stroke="#c3c6cb" stroke-width=".8"/><rect x="2.100" y="2.600" width="14.800" height="10.400" fill="url(#ig)"/><circle cx="5.300" cy="5.300" r="1.900" fill="#e6f3b4"/><path d="M10.500 12L13.200 6.500 15.200 8.800 16.300 12z" fill="#4e5563"/><circle cx="16.500" cy="13" r="1.700" fill="#d2d5da" stroke="#a5a9b0" stroke-width=".6"/></svg><span class="t" style="left:368.20px;top:473.40px;font-size:14px;color:#333;letter-spacing:0.000px;">logo-sample-sm.png</span><span class="t" style="left:757.60px;top:473.40px;font-size:14px;color:#333;letter-spacing:0.000px;">21.23 KB</span><span class="t" style="left:856.30px;top:473.40px;font-size:14px;color:#333;letter-spacing:0.000px;">Apr 14, 2016 11:02 AM</span><div style="position:absolute;left:323px;top:497.8px;width:701px;height:27.75px;background:#f8f8f8"></div><svg style="position:absolute;left:334.3px;top:504.1px;" width="18.6" height="15" viewBox="0 0 18.6 15" preserveAspectRatio="none"><rect x=".4" y=".4" width="17.800" height="14.200" rx="1" fill="#eceef1" stroke="#c3c6cb" stroke-width=".8"/><rect x="2.100" y="2.600" width="14.800" height="10.400" fill="url(#ig)"/><circle cx="5.300" cy="5.300" r="1.900" fill="#e6f3b4"/><path d="M10.500 12L13.200 6.500 15.200 8.800 16.300 12z" fill="#4e5563"/><circle cx="16.500" cy="13" r="1.700" fill="#d2d5da" stroke="#a5a9b0" stroke-width=".6"/></svg><span class="t" style="left:368.20px;top:501.15px;font-size:14px;color:#333;letter-spacing:0.000px;">logo-sample.png</span><span class="t" style="left:757.60px;top:501.15px;font-size:14px;color:#333;letter-spacing:0.000px;">63.05 KB</span><span class="t" style="left:856.30px;top:501.15px;font-size:14px;color:#333;letter-spacing:0.000px;">Apr 14, 2016 11:00 AM</span><div style="position:absolute;left:323px;top:525.55px;width:701px;height:27.75px;background:#fff"></div><svg style="position:absolute;left:336px;top:530.8499999999999px;" width="16" height="18" viewBox="0 0 16 18" preserveAspectRatio="none"><path d="M.5 1.800L1.800 .5H15.500V17H.5z" fill="#ececec" stroke="#c6c6c6" stroke-width=".8"/><path d="M1.300 2V16.600" stroke="#cfcfcf" stroke-width="1.400"/><path d="M.6 17.200H15.500" stroke="#b4b4b4" stroke-width="1"/><path d="M5 3.500H12.500M5 5.500H12.500M5 7.500H12.500M5 9.500H12.500M5 11.500H12.500M5 13.500H12.500" stroke="#c8c8c8" stroke-width=".8"/></svg><span class="t" style="left:368.20px;top:528.90px;font-size:14px;color:#333;letter-spacing:0.000px;">php.ini</span><span class="t" style="left:757.60px;top:528.90px;font-size:14px;color:#333;letter-spacing:0.000px;">28.53 KB</span><span class="t" style="left:856.30px;top:528.90px;font-size:14px;color:#333;letter-spacing:0.000px;">Yesterday 10:55 AM</span><div style="position:absolute;left:323px;top:553.3px;width:701px;height:27.75px;background:#f8f8f8"></div><svg style="position:absolute;left:336px;top:558.5999999999999px;" width="16" height="18" viewBox="0 0 16 18" preserveAspectRatio="none"><path d="M.5 1.800L1.800 .5H15.500V17H.5z" fill="#ececec" stroke="#c6c6c6" stroke-width=".8"/><path d="M1.300 2V16.600" stroke="#cfcfcf" stroke-width="1.400"/><path d="M.6 17.200H15.500" stroke="#b4b4b4" stroke-width="1"/><path d="M5 3.500H12.500M5 5.500H12.500M5 7.500H12.500M5 9.500H12.500M5 11.500H12.500M5 13.500H12.500" stroke="#c8c8c8" stroke-width=".8"/></svg><span class="t" style="left:368.20px;top:556.65px;font-size:14px;color:#333;letter-spacing:0.000px;">php.ini.old</span><span class="t" style="left:757.60px;top:556.65px;font-size:14px;color:#333;letter-spacing:0.000px;">27.81 KB</span><span class="t" style="left:856.30px;top:556.65px;font-size:14px;color:#333;letter-spacing:0.000px;">Jan 4, 2016 11:53 AM</span><div style="position:absolute;left:323px;top:581.05px;width:701px;height:27.75px;background:#fff"></div><svg style="position:absolute;left:334.9px;top:587.25px;" width="16.5" height="16.5" viewBox="0 0 16.5 16.5" preserveAspectRatio="none"><path d="M2.900 .6H14.400Q16 .8 15.700 2.500L14.200 15.500H1.200Q.2 15.100 .6 14L2.200 1.400Q2.300 .6 2.900 .6z" fill="#f3f8fe" stroke="#86b6ec" stroke-width="1"/><path d="M.8 13.400H11.200Q12.400 13.600 12.300 15" stroke="#8dbbee" stroke-width="1" fill="none"/></svg><span style="position:absolute;left:335.29999999999995px;top:589.85px;font-size:9.5px;line-height:10px;font-weight:bold;color:#0d1848;letter-spacing:-0.9px;transform:scale(.88,1.08);transform-origin:0 0">PHP</span><span class="t" style="left:368.20px;top:584.40px;font-size:14px;color:#333;letter-spacing:0.000px;">phpinfo.php</span><span class="t" style="left:757.60px;top:584.40px;font-size:14px;color:#333;letter-spacing:0.000px;">21 bytes</span><span class="t" style="left:856.30px;top:584.40px;font-size:14px;color:#333;letter-spacing:0.000px;">Jan 4, 2016 11:54 AM</span><div style="position:absolute;left:323px;top:608.8px;width:701px;height:27.75px;background:#f8f8f8"></div><svg style="position:absolute;left:334.3px;top:615.0999999999999px;" width="18.6" height="15" viewBox="0 0 18.6 15" preserveAspectRatio="none"><rect x=".4" y=".4" width="17.800" height="14.200" rx="1" fill="#eceef1" stroke="#c3c6cb" stroke-width=".8"/><rect x="2.100" y="2.600" width="14.800" height="10.400" fill="url(#ig)"/><circle cx="5.300" cy="5.300" r="1.900" fill="#e6f3b4"/><path d="M10.500 12L13.200 6.500 15.200 8.800 16.300 12z" fill="#4e5563"/><circle cx="16.500" cy="13" r="1.700" fill="#d2d5da" stroke="#a5a9b0" stroke-width=".6"/></svg><span class="t" style="left:368.20px;top:612.15px;font-size:14px;color:#333;letter-spacing:0.000px;">primary-submenu.jpg</span><span class="t" style="left:757.60px;top:612.15px;font-size:14px;color:#333;letter-spacing:0.000px;">116.91 KB</span><span class="t" style="left:856.30px;top:612.15px;font-size:14px;color:#333;letter-spacing:0.000px;">Apr 12, 2016 11:13 AM</span><div style="position:absolute;left:323px;top:219.75px;width:701px;height:1.1px;background:#e0e0e0"></div><div style="position:absolute;left:323px;top:247.5px;width:701px;height:1.1px;background:#e0e0e0"></div><div style="position:absolute;left:323px;top:275.25px;width:701px;height:1.1px;background:#e0e0e0"></div><div style="position:absolute;left:323px;top:303.0px;width:701px;height:1.1px;background:#e0e0e0"></div><div style="position:absolute;left:323px;top:330.75px;width:701px;height:1.1px;background:#e0e0e0"></div><div style="position:absolute;left:323px;top:358.5px;width:701px;height:1.1px;background:#e0e0e0"></div><div style="position:absolute;left:323px;top:386.25px;width:701px;height:1.1px;background:#e0e0e0"></div><div style="position:absolute;left:323px;top:414.0px;width:701px;height:1.1px;background:#e0e0e0"></div><div style="position:absolute;left:323px;top:441.75px;width:701px;height:1.1px;background:#e0e0e0"></div><div style="position:absolute;left:323px;top:469.5px;width:701px;height:1.1px;background:#e0e0e0"></div><div style="position:absolute;left:323px;top:497.25px;width:701px;height:1.1px;background:#e0e0e0"></div><div style="position:absolute;left:323px;top:525.0px;width:701px;height:1.1px;background:#e0e0e0"></div><div style="position:absolute;left:323px;top:552.75px;width:701px;height:1.1px;background:#e0e0e0"></div><div style="position:absolute;left:323px;top:580.5px;width:701px;height:1.1px;background:#e0e0e0"></div><div style="position:absolute;left:323px;top:608.25px;width:701px;height:1.1px;background:#e0e0e0"></div><div style="position:absolute;left:323px;top:636.0px;width:701px;height:1.1px;background:#e0e0e0"></div></div></div><div style="position:absolute;left:322.9px;top:184.4px;width:1.3px;height:436px;background:#828282"></div><div style="position:absolute;left:489.2px;top:261.6px;width:180.2px;height:310.3px;background:#fff;border:1px solid #dcdcd0;box-sizing:border-box;box-shadow:0 5px 9px rgba(0,0,0,.42)"></div><span class="t" style="left:508.15px;top:276.15px;font-size:14px;color:#222;letter-spacing:0.484px;">Download</span><span class="t" style="left:508.24px;top:304.75px;font-size:14px;color:#222;letter-spacing:-0.089px;">View</span><span class="t" style="left:508.15px;top:391.05px;font-size:14px;color:#222;letter-spacing:0.312px;">Move</span><span class="t" style="left:508.59px;top:419.65px;font-size:14px;color:#222;letter-spacing:-0.316px;">Copy</span><span class="t" style="left:508.15px;top:448.25px;font-size:14px;color:#222;letter-spacing:0.010px;">Rename</span><span class="t" style="left:508.59px;top:477.15px;font-size:14px;color:#222;letter-spacing:0.061px;">Change Permissions</span><span class="t" style="left:508.15px;top:505.95px;font-size:14px;color:#222;letter-spacing:0.300px;">Delete</span><span class="t" style="left:508.59px;top:534.55px;font-size:14px;color:#222;letter-spacing:0.031px;">Compress</span><span class="t" style="left:508.59px;top:361.85px;font-size:14px;color:#222;letter-spacing:-0.146px;">Code Edit</span><div style="position:absolute;left:485.8px;top:321.6px;width:185.1px;height:47.7px;border:5.8px solid #d81a1f;box-sizing:border-box;background:#fff"></div><div style="position:absolute;left:496px;top:331px;width:166.5px;height:28.5px;background:#416bd9"></div><span class="t" style="left:508.15px;top:333.45px;font-size:14px;color:#fff;letter-spacing:0.175px;">Edit</span></body></html>
